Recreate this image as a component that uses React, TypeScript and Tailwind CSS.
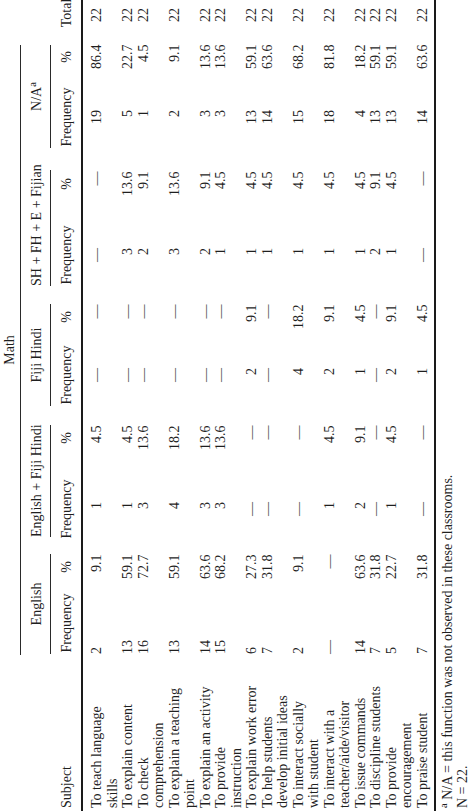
type Row = { subject: string[]; vals: string[] };

const D = "—";

const rows: Row[] = [
  { subject: ["To teach language", "skills"], vals: ["2", "9.1", "1", "4.5", D, D, D, D, "19", "86.4", "22"] },
  { subject: ["To explain content"], vals: ["13", "59.1", "1", "4.5", D, D, "3", "13.6", "5", "22.7", "22"] },
  { subject: ["To check", "comprehension"], vals: ["16", "72.7", "3", "13.6", D, D, "2", "9.1", "1", "4.5", "22"] },
  { subject: ["To explain a teaching", "point"], vals: ["13", "59.1", "4", "18.2", D, D, "3", "13.6", "2", "9.1", "22"] },
  { subject: ["To explain an activity"], vals: ["14", "63.6", "3", "13.6", D, D, "2", "9.1", "3", "13.6", "22"] },
  { subject: ["To provide", "instruction"], vals: ["15", "68.2", "3", "13.6", D, D, "1", "4.5", "3", "13.6", "22"] },
  { subject: ["To explain work error"], vals: ["6", "27.3", D, D, "2", "9.1", "1", "4.5", "13", "59.1", "22"] },
  { subject: ["To help students", "develop initial ideas"], vals: ["7", "31.8", D, D, D, D, "1", "4.5", "14", "63.6", "22"] },
  { subject: ["To interact socially", "with student"], vals: ["2", "9.1", D, D, "4", "18.2", "1", "4.5", "15", "68.2", "22"] },
  { subject: ["To interact with a", "teacher/aide/visitor"], vals: [D, D, "1", "4.5", "2", "9.1", "1", "4.5", "18", "81.8", "22"] },
  { subject: ["To issue commands"], vals: ["14", "63.6", "2", "9.1", "1", "4.5", "1", "4.5", "4", "18.2", "22"] },
  { subject: ["To discipline students"], vals: ["7", "31.8", D, D, D, D, "2", "9.1", "13", "59.1", "22"] },
  { subject: ["To provide", "encouragement"], vals: ["5", "22.7", "1", "4.5", "2", "9.1", "1", "4.5", "13", "59.1", "22"] },
  { subject: ["To praise student"], vals: ["7", "31.8", D, D, "1", "4.5", D, D, "14", "63.6", "22"] },
];

// same track widths for every section so the columns line up
const grid =
  "grid grid-cols-[156px_64px_54px_56px_86px_40px_76px_48px_84px_60px_64px_28px]";

// small shifts where a column's content sits off its track centre
const pad = ["", "pr-[6px]", "", "", "", "", "", "pl-[10px]", "", "pr-[4px]", "pr-[12px]"];

const subHeads = ["Frequency", "%", "Frequency", "%", "Frequency", "%", "Frequency", "%", "Frequency", "%"];

const Cell = ({ value, i }: { value: string; i: number }) => {
  // English frequencies sit flush left under their heading
  if (i === 0) {
    return (
      <div className={`pl-[1px] ${value === D ? "text-[#4a4a4a]" : ""}`}>{value}</div>
    );
  }
  return (
    <div className={`flex justify-center ${pad[i]}`}>
      <span
        className={`${i % 2 === 0 ? "w-[14px]" : "w-[25px]"} whitespace-nowrap text-right ${
          value === D ? "text-[#4a4a4a]" : ""
        }`}
      >
        {value}
      </span>
    </div>
  );
};

export default function App() {
  return (
    <div className="h-[811px] w-[474px] overflow-hidden bg-white">
      <div className="h-[474px] w-[816px] origin-top-left -rotate-90 translate-y-[811px] font-['Liberation_Serif',serif] text-[14px] leading-[15.5px] text-[#1f1f1f]">
        {/* Math */}
        <div className={grid}>
          <div className="col-span-10 col-start-2 mr-[22px] border-b border-[#2a2a2a] pt-[2px] pb-[2.5px] text-center">
            Math
          </div>
        </div>

        {/* language groups */}
        <div className={grid}>
          <div className="col-span-2 col-start-2 ml-[1px] mr-[17px] border-b border-[#2a2a2a] pt-[8px] pb-[5.5px] text-center whitespace-nowrap">
            English
          </div>
          <div className="col-span-2 col-start-4 mr-[30px] border-b border-[#2a2a2a] pt-[8px] pb-[5.5px] text-center whitespace-nowrap">
            English + Fiji Hindi
          </div>
          <div className="col-span-2 col-start-6 ml-[-11px] mr-[25px] border-b border-[#2a2a2a] pt-[8px] pb-[5.5px] text-center whitespace-nowrap">
            Fiji Hindi
          </div>
          <div className="col-span-2 col-start-8 ml-[-7px] mr-[23px] border-b border-[#2a2a2a] pt-[8px] pb-[5.5px] text-center whitespace-nowrap">
            SH + FH + E + Fijian
          </div>
          <div className="col-span-2 col-start-10 ml-[-1px] mr-[22px] border-b border-[#2a2a2a] pt-[8px] pb-[5.5px] text-center whitespace-nowrap">
            N/A<sup>a</sup>
          </div>
        </div>

        {/* column heads */}
        <div className={`${grid} pt-[8px] pb-[6.5px]`}>
          <div className="pl-[3px]">Subject</div>
          {subHeads.map((h, i) => (
            <div key={i} className={`flex justify-center whitespace-nowrap ${pad[i]}`}>
              {h}
            </div>
          ))}
          <div className="flex justify-center pr-[8px]">Total</div>
        </div>

        <div className="h-[2px] bg-[#1a1a1a]" />

        {/* body */}
        <div className="pt-[6px]">
          {rows.map((r, ri) => (
            <div key={ri} className={`${grid} items-start`}>
              <div className="pl-[3px] whitespace-nowrap">
                {r.subject.map((line, li) => (
                  <div key={li}>{line}</div>
                ))}
              </div>
              {r.vals.map((v, i) => (
                <Cell key={i} value={v} i={i} />
              ))}
            </div>
          ))}
        </div>

        <div className="mt-[4px] h-[2px] bg-[#1a1a1a]" />

        <div className="pt-[4px] pl-[3px] leading-[15px]">
          <p>
            <sup>a</sup> N/A = this function was not observed in these classrooms.
          </p>
          <p>N = 22.</p>
        </div>
      </div>
    </div>
  );
}
